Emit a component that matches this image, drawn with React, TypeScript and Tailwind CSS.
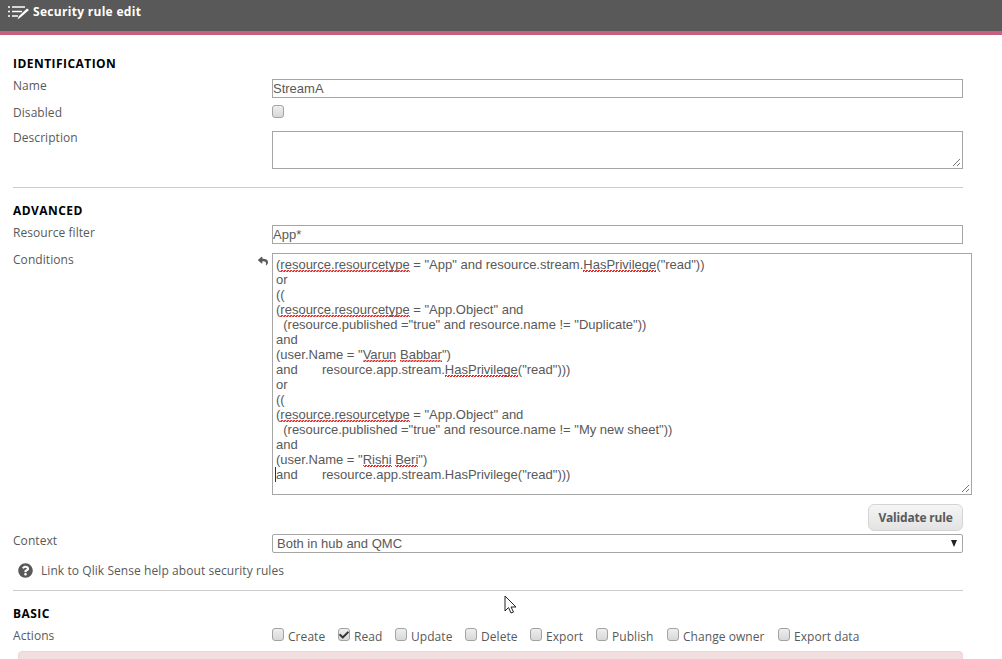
import React from "react";
import { FaQuestionCircle, FaReply, FaCheck } from "react-icons/fa";

const W = ({ children }: { children: React.ReactNode }) => (
  <span className="bg-[linear-gradient(135deg,transparent_30%,#e02828_30%,#e02828_70%,transparent_70%)] bg-[length:3px_2px] bg-repeat-x bg-bottom">{children}</span>
);

function Box({ checked }: { checked?: boolean }) {
  return (
    <span className="relative w-[12px] h-[13px] shrink-0 rounded-[3px] border border-[#a3a3a3] bg-gradient-to-b from-[#eeeeee] to-[#d8d8d8] flex items-center justify-center">
      {checked && <FaCheck className="w-[10px] h-[10px] text-[#333333]" />}
    </span>
  );
}

function Row({ label, className, labelClass, children }: { label: string; className: string; labelClass?: string; children?: React.ReactNode }) {
  return (
    <div className={`flex ${className}`}>
      <div className={`w-[259px] shrink-0 text-[12px] leading-[15px] text-[#595959] tracking-[0.06px] ${labelClass ?? ""}`}>{label}</div>
      {children}
    </div>
  );
}

function Field({ value }: { value: string }) {
  return (
    <input
      readOnly
      value={value}
      className="w-[691px] h-[19px] border border-[#a6a6a6] px-[0px] text-[13px] text-[#595959] outline-none bg-white [font-family:'Liberation_Sans',sans-serif]"
    />
  );
}

function Grip() {
  return (
    <svg className="absolute right-[1px] bottom-[1px]" width="9" height="9" viewBox="0 0 9 9">
      <path d="M1 8 8 1M5 8 8 5" stroke="#777" strokeWidth="1" fill="none" />
    </svg>
  );
}

function Action({ label, checked, className }: { label: string; checked?: boolean; className: string }) {
  return (
    <div className={`flex items-start gap-[4px] ${className}`}>
      <Box checked={checked} />
      <span className="text-[12px] leading-[15px] text-[#595959] mt-[1px] tracking-[0.06px]">{label}</span>
    </div>
  );
}

function Heading({ children, className }: { children: React.ReactNode; className: string }) {
  return <div className={`text-[12px] leading-[15px] font-bold text-black tracking-[0.45px] ${className}`}>{children}</div>;
}

export default function App() {
  return (
    <div className="relative w-[1002px] h-[659px] overflow-hidden bg-white [font-family:'Open_Sans',sans-serif]">
      <header className="h-[35px] bg-[#595959] border-b-[4px] border-[#c5607f] flex items-start pl-[7px] pt-[4px] gap-[4px]">
        <svg width="22" height="16" viewBox="0 0 22 16" fill="none" stroke="#fff" strokeWidth="1.5">
          <path d="M1 3h2M5 3h13M1 7.5h2M5 7.5h10M1 12h2M5 12h6" />
          <path d="M10.5 15.5l1.5-3.5L20 4.5l2 1.5-8 7z" fill="#fff" stroke="none" />
        </svg>
        <span className="text-[12px] leading-[15px] font-bold text-white tracking-[0.3px]">Security rule edit</span>
      </header>

      <main className="pl-[13px] w-[963px]">
        <Heading className="pt-[21px]">IDENTIFICATION</Heading>
        <Row label="Name" className="mt-[8px]" labelClass="-mt-[1px]"><Field value="StreamA" /></Row>
        <Row label="Disabled" className="mt-[7px]"><Box /></Row>
        <Row label="Description" className="mt-[11px]" labelClass="-mt-[1px]">
          <div className="relative w-[691px] h-[38px] border border-[#a6a6a6]"><Grip /></div>
        </Row>
        <div className="mt-[18px] border-t border-[#cccccc]" />

        <Heading className="mt-[15px]">ADVANCED</Heading>
        <Row label="Resource filter" className="mt-[7px]"><Field value="App*" /></Row>
        <div className="mt-[9px] flex">
          <div className="w-[259px] shrink-0 relative text-[12px] leading-[15px] text-[#595959] tracking-[0.06px] -mt-[1px]">
            Conditions
            <FaReply className="absolute right-[4px] top-[4px] w-[10px] h-[10px] text-[#595959]" />
          </div>
          <div className="relative w-[700px] h-[242px] shrink-0 border border-[#a6a6a6] pl-[3px] pt-[3px] text-[13px] leading-[15px] text-[#595959] whitespace-pre [font-family:'Liberation_Sans',sans-serif]">
            <div>(<W>resource.resourcetype</W> = "App" and resource.stream.<W>HasPrivilege</W>("read"))</div>
            <div>or</div>
            <div>((</div>
            <div>(<W>resource.resourcetype</W> = "App.Object" and</div>
            <div>  (resource.published ="true" and resource.name != "Duplicate"))</div>
            <div>and</div>
            <div>(user.Name = "<W>Varun</W> <W>Babbar</W>")</div>
            <div><span className="inline-block w-[46px]">and</span>resource.app.stream.<W>HasPrivilege</W>("read")))</div>
            <div>or</div>
            <div>((</div>
            <div>(<W>resource.resourcetype</W> = "App.Object" and</div>
            <div>  (resource.published ="true" and resource.name != "My new sheet"))</div>
            <div>and</div>
            <div>(user.Name = "<W>Rishi</W> <W>Beri</W>")</div>
            <div className="border-l border-[#333333] -ml-[1px]"><span className="inline-block w-[46px]">and</span>resource.app.stream.HasPrivilege("read")))</div>
            <Grip />
          </div>
        </div>

        <div className="mt-[9px] flex justify-end">
          <button className="w-[95px] h-[27px] rounded-[6px] border border-[#d4d4d4] bg-gradient-to-b from-[#f5f5f5] to-[#e3e3e3] text-[12px] font-bold text-[#595959] tracking-[-0.2px]">
            Validate rule
          </button>
        </div>

        <Row label="Context" className="mt-[3px]" labelClass="-mt-[1px]">
          <div className="w-[691px] h-[19px] rounded-[2px] border border-[#a6a6a6] pl-[4px] pr-[4px] flex items-center justify-between text-[13px] text-[#595959] [font-family:'Liberation_Sans',sans-serif]">
            <span>Both in hub and QMC</span>
            <span className="w-0 h-0 border-x-[3.5px] border-x-transparent border-t-[7px] border-t-[#222222] mr-[1px]" />
          </div>
        </Row>

        <div className="mt-[10px] ml-[5px] flex items-center gap-[8px] h-[15px]">
          <FaQuestionCircle className="w-[15px] h-[15px] text-[#595959]" />
          <span className="text-[12px] leading-[15px] text-[#595959] tracking-[0.07px]">Link to Qlik Sense help about security rules</span>
        </div>
        <div className="mt-[12px] border-t border-[#cccccc]" />

        <Heading className="mt-[15px]">BASIC</Heading>
        <Row label="Actions" className="mt-[7px]">
          <div className="flex">
            <Action label="Create" className="w-[66px]" />
            <Action label="Read" checked className="w-[57px]" />
            <Action label="Update" className="w-[70px]" />
            <Action label="Delete" className="w-[65px]" />
            <Action label="Export" className="w-[66px]" />
            <Action label="Publish" className="w-[71px]" />
            <Action label="Change owner" className="w-[111px]" />
            <Action label="Export data" className="w-[90px]" />
          </div>
        </Row>
        <div className="mt-[7px] ml-[5px] h-[40px] rounded-[4px] bg-[#f2dede] border border-[#ebd5d5]" />
      </main>

      <svg className="absolute left-[504px] top-[595px]" width="13" height="20" viewBox="0 0 13 20">
        <path d="M1 1v15l3.5-3.5L7 18l2.5-1-2.5-5h5z" fill="#fff" stroke="#222" strokeWidth="1" />
      </svg>
    </div>
  );
}
